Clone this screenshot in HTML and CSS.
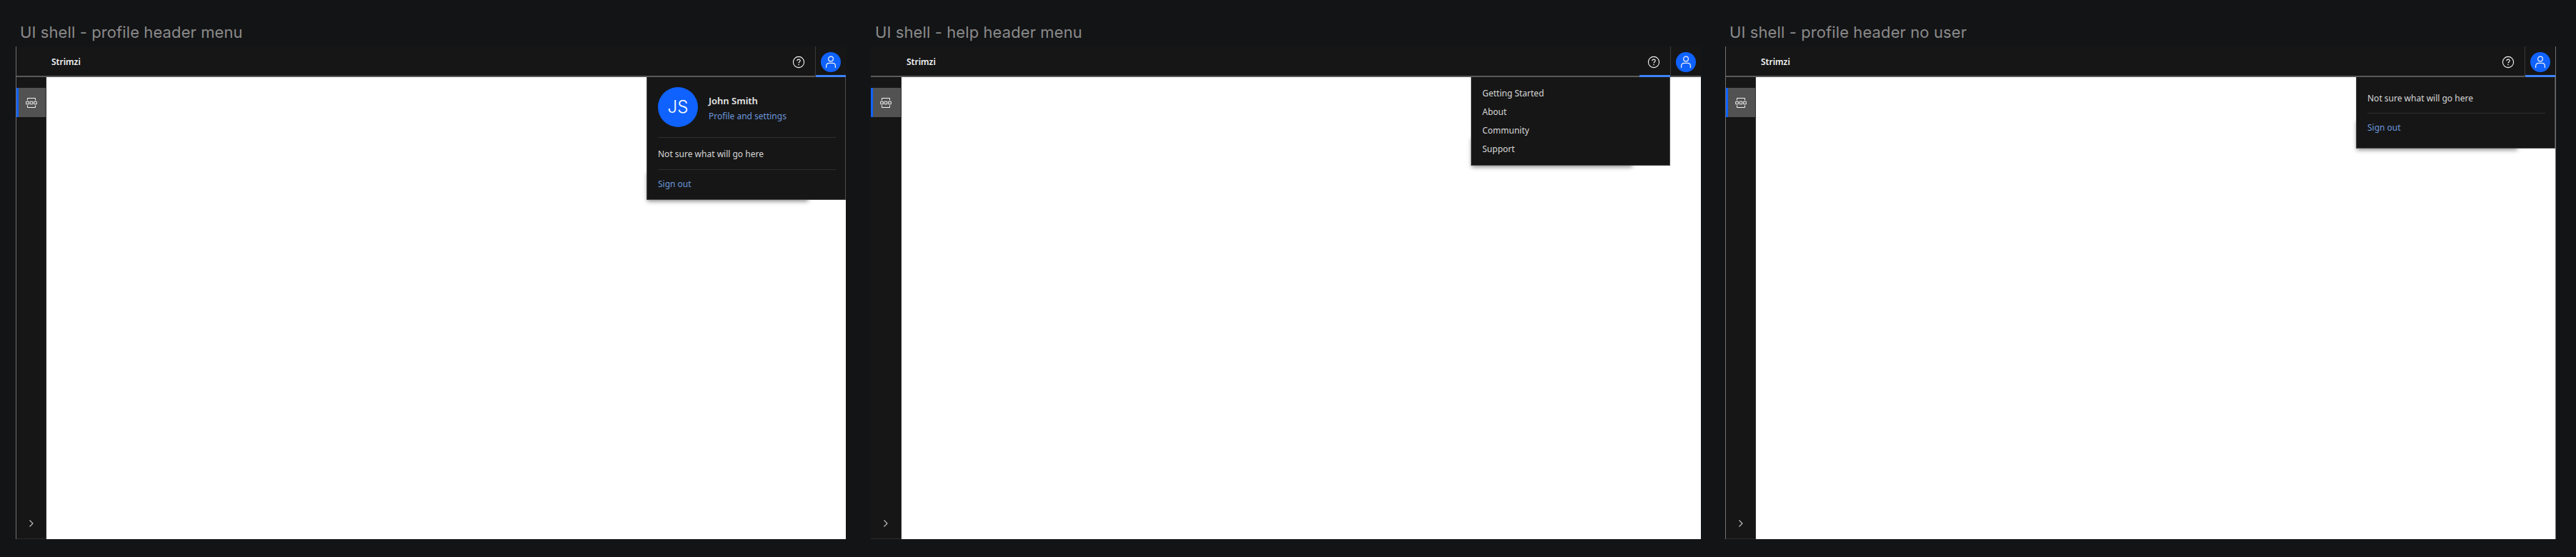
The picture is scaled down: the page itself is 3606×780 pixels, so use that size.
FILE: index.html
```html
<!DOCTYPE html>
<html lang="en">
<head>
<meta charset="utf-8">
<title>UI shell</title>
<link rel="stylesheet" href="styles.css">
</head>
<body>
<svg width="0" height="0" class="defs">
  <symbol id="i-help" viewBox="0 0 18 18"><circle cx="9" cy="9" r="7.6" fill="none" stroke="currentColor" stroke-width="1.1"/><path d="M6.8 7.2c0-1.300 1-2.100 2.200-2.100s2.200.8 2.200 2c0 1.600-2.200 1.700-2.200 3.400" fill="none" stroke="currentColor" stroke-width="1.1"/><circle cx="9" cy="12.600" r=".8" fill="currentColor"/></symbol>
  <symbol id="i-user" viewBox="0 0 20 20"><circle cx="10" cy="5.500" r="3.400" fill="none" stroke="currentColor" stroke-width="1.200"/><path d="M3.600 18v-2.600c0-2.300 1.700-4 4-4h4.800c2.300 0 4 1.700 4 4V18" fill="none" stroke="currentColor" stroke-width="1.200"/></symbol>
  <symbol id="i-node" viewBox="0 0 16 16"><path d="M2.500 4.500v-3h11v3M2.500 11.500v3h11v-3" fill="none" stroke="currentColor" stroke-width="1"/><path d="M.7 6.200h3.600v3.600H.7zM6.200 6.200h3.600v3.600H6.200zM11.700 6.200h3.600v3.600h-3.600z" fill="none" stroke="currentColor" stroke-width="1"/></symbol>
  <symbol id="i-chev" viewBox="0 0 10 12"><path d="M2.500 1.500 7 6l-4.500 4.500" fill="none" stroke="currentColor" stroke-width="1.100"/></symbol>
</svg>

<section class="frame frame-line">
  <h2 class="title">UI shell - profile header menu</h2>
  <div class="shell">
    <header class="bar">
      <span class="brand">Strimzi</span>
      <button class="tool"><svg class="ico-help"><use href="#i-help"/></svg></button>
      <button class="tool tool-split tool-on"><span class="bubble"><svg class="ico-user"><use href="#i-user"/></svg></span></button>
    </header>
    <div class="body">
      <nav class="side">
        <a class="side-item"><svg class="ico-node"><use href="#i-node"/></svg></a>
        <svg class="ico-chev"><use href="#i-chev"/></svg>
      </nav>
      <main class="main">
        <div class="menu menu-full">
          <div class="who">
            <span class="avatar">JS</span>
            <div class="who-text">
              <div class="who-name">John Smith</div>
              <a class="link">Profile and settings</a>
            </div>
          </div>
          <hr class="rule">
          <p class="note">Not sure what will go here</p>
          <hr class="rule">
          <a class="link sign">Sign out</a>
        </div>
      </main>
    </div>
  </div>
</section>

<section class="frame">
  <h2 class="title">UI shell - help header menu</h2>
  <div class="shell">
    <header class="bar">
      <span class="brand">Strimzi</span>
      <button class="tool tool-on"><svg class="ico-help"><use href="#i-help"/></svg></button>
      <button class="tool tool-split"><span class="bubble"><svg class="ico-user"><use href="#i-user"/></svg></span></button>
    </header>
    <div class="body">
      <nav class="side">
        <a class="side-item"><svg class="ico-node"><use href="#i-node"/></svg></a>
        <svg class="ico-chev"><use href="#i-chev"/></svg>
      </nav>
      <main class="main">
        <div class="menu menu-help">
          <a class="help-item">Getting Started</a>
          <a class="help-item">About</a>
          <a class="help-item">Community</a>
          <a class="help-item">Support</a>
        </div>
      </main>
    </div>
  </div>
</section>

<section class="frame frame-line frame-last">
  <h2 class="title">UI shell - profile header no user</h2>
  <div class="shell">
    <header class="bar">
      <span class="brand">Strimzi</span>
      <button class="tool"><svg class="ico-help"><use href="#i-help"/></svg></button>
      <button class="tool tool-split tool-on"><span class="bubble"><svg class="ico-user"><use href="#i-user"/></svg></span></button>
    </header>
    <div class="body">
      <nav class="side">
        <a class="side-item"><svg class="ico-node"><use href="#i-node"/></svg></a>
        <svg class="ico-chev"><use href="#i-chev"/></svg>
      </nav>
      <main class="main">
        <div class="menu menu-nouser">
          <p class="note">Not sure what will go here</p>
          <hr class="rule">
          <a class="link sign">Sign out</a>
        </div>
      </main>
    </div>
  </div>
</section>
</body>
</html>
```

FILE: styles.css
```css
* { box-sizing: border-box; }
html, body { margin: 0; height: 780px; overflow: hidden; }
body {
  background: #131416;
  display: flex;
  gap: 35px;
  padding-left: 22px;
  font-family: "Noto Sans", "Open Sans", sans-serif;
}
.defs { position: absolute; }
.frame { width: 1162px; flex: none; }
.frame-last { margin-left: -1px; width: 1163px; }
.title {
  margin: 0;
  height: 65px;
  padding: 30px 0 0 6px;
  font: 400 22px/30px "Inter", sans-serif;
  letter-spacing: .1px;
  color: #8a8a8a;
}
.shell {
  height: 690px;
  display: flex;
  flex-direction: column;
  background: #161616;
}
.frame-line .shell { border-left: 1px solid #6f6f6f; }
.frame-last .shell { border-right: 1px solid #6f6f6f; }
.bar {
  height: 43px;
  display: flex;
  align-items: stretch;
  border-bottom: 2px solid #5a5a5a;
  position: relative;
  flex: none;
}
.brand {
  margin-right: auto;
  padding-left: 49px;
  font-size: 12px;
  font-weight: 600;
  line-height: 43px;
  color: #f4f4f4;
}
.frame:not(.frame-line) .brand { padding-left: 50px; }
.tool {
  width: 43px;
  height: 43px;
  padding: 0 3px 0 0;
  margin: 0;
  background: none;
  border: 0;
  color: #f4f4f4;
  display: flex;
  align-items: center;
  justify-content: center;
  position: relative;
}
.tool-split { border-left: 1px solid #393939; padding: 0; }
.tool-on { box-shadow: inset 0 -3px 0 #3d82f6; }
.ico-help { width: 18px; height: 18px; }
.bubble {
  width: 28px;
  height: 28px;
  border-radius: 50%;
  background: #0f62fe;
  display: flex;
  align-items: center;
  justify-content: center;
}
.ico-user { width: 20px; height: 20px; }
.body { flex: 1; display: flex; min-height: 0; }
.side {
  width: 42px;
  flex: none;
  display: flex;
  flex-direction: column;
  align-items: center;
  padding-top: 15px;
  border-right: 1px solid #2c2c2c;
  border-bottom: 1px solid #2c2c2c;
}
.frame:not(.frame-line) .side { width: 43px; }
.side-item {
  align-self: stretch;
  height: 41px;
  background: #525252;
  border-left: 3px solid #0f62fe;
  padding-right: 3px;
  color: #f4f4f4;
  display: flex;
  align-items: center;
  justify-content: center;
}
.ico-node { width: 16px; height: 16px; }
.ico-chev { width: 10px; height: 12px; margin-top: auto; margin-bottom: 15px; color: #c6c6c6; }
.main { flex: 1; background: #fff; position: relative; z-index: 0; }
.menu {
  position: absolute;
  top: 0;
  right: 0;
  width: 279px;
  background: #161616;
  border: 1px solid #4c4c4c;
  border-top: 0;
  padding: 0 13px 0 15px;
  font-size: 12px;
  color: #d6d6d6;
}
.menu::before {
  content: "";
  position: absolute;
  z-index: -1;
  left: 0;
  bottom: 0;
  width: 225px;
  height: 40px;
  box-shadow: 0 3px 6px rgba(0, 0, 0, .45);
}
.menu-full { height: 172px; }
.menu-help { height: 124px; padding-top: 10px; right: 43px; }
.menu-nouser { height: 100px; padding-top: 20px; }
.who { display: flex; align-items: center; gap: 15px; padding-top: 14px; }
.avatar {
  width: 56px;
  height: 56px;
  flex: none;
  border-radius: 50%;
  background: #0f62fe;
  color: #fff;
  font-family: "Inter", sans-serif;
  font-size: 24px;
  font-weight: 300;
  line-height: 56px;
  text-align: center;
}
.who-text { padding-top: 3px; }
.who-name { font-size: 13px; font-weight: 600; line-height: 21px; color: #e8e8e8; }
.who-text .link { display: block; line-height: 21px; }
.link { color: #6b96dc; }
.rule { height: 1px; margin: 0; border: 0; background: #2f2f2f; }
.menu-full .rule:first-of-type { margin-top: 14px; }
.note { margin: 0; line-height: 20px; }
.menu-full .note { padding: 13px 0 11px; }
.menu-nouser .note { padding-bottom: 10px; }
.sign { display: block; line-height: 20px; padding-top: 10px; }
.help-item { display: block; line-height: 26px; }
```
